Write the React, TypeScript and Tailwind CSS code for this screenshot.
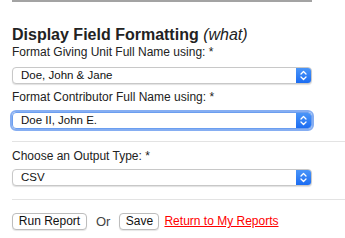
import React from "react";

/* Report builder: display formatting section, mocked as static controls. */
function FakeSelect({ value, focused }: { value: string; focused?: boolean }) {
  return (
    <div
      className={
        "flex h-[17px] w-[300px] items-stretch rounded-[4px] border bg-white shadow-[0_1px_1px_rgba(0,0,0,0.12)] " +
        (focused
          ? "border-[#6b9ef0] outline outline-[2px] outline-[#86aef2]"
          : "border-[#c8c8c8]")
      }
    >
      <span className="flex-1 pl-[8px] text-[11.5px] leading-[15px] text-[#111]">{value}</span>
      <span className="flex w-[15px] items-center justify-center rounded-r-[3px] bg-gradient-to-b from-[#4a95f8] to-[#1b6cf2]">
        <svg width="7" height="11" viewBox="0 0 7 11" fill="none">
          <path d="M1 4 L3.5 1.5 L6 4" stroke="white" strokeWidth="1.3" strokeLinecap="round" strokeLinejoin="round" />
          <path d="M1 7 L3.5 9.5 L6 7" stroke="white" strokeWidth="1.3" strokeLinecap="round" strokeLinejoin="round" />
        </svg>
      </span>
    </div>
  );
}

export default function App() {
  return (
    <div className="h-[238px] w-[345px] overflow-hidden bg-white pl-3 font-['Liberation_Sans',Arial,sans-serif] text-[#222]">
      <div className="h-[2px] w-[300px] bg-[#a3a3a3]" />
      <h2 className="mt-[23px] text-[16px] font-bold leading-[20px]">
        Display Field Formatting <span className="font-normal italic">(what)</span>
      </h2>
      <div className="text-[12px] leading-[14px]">Format Giving Unit Full Name using: *</div>
      <div className="mt-[8px]">
        <FakeSelect value="Doe, John & Jane" />
      </div>
      <div className="mt-[6px] text-[12px] leading-[14px]">Format Contributor Full Name using: *</div>
      <div className="mt-[8px]">
        <FakeSelect value="Doe II, John E." focused />
      </div>
      <div className="mt-[12px] h-px bg-[#e3e3e3]" />
      <div className="mt-[7px] text-[12px] leading-[14px]">Choose an Output Type: *</div>
      <div className="mt-[6px]">
        <FakeSelect value="CSV" />
      </div>
      <div className="mt-[13px] h-px bg-[#e3e3e3]" />
      <div className="mt-[13px] flex items-center">
        <button className="h-[17px] w-[75px] rounded-[4px] border border-[#bdbdbd] bg-white text-[12px] leading-[15px] text-[#111] shadow-[0_1px_1px_rgba(0,0,0,0.1)]">
          Run Report
        </button>
        <span className="ml-[9px] text-[13px] leading-[15px] text-[#444]">Or</span>
        <button className="ml-[9px] h-[17px] w-[40px] rounded-[4px] border border-[#bdbdbd] bg-white text-[12px] leading-[15px] text-[#111] shadow-[0_1px_1px_rgba(0,0,0,0.1)]">
          Save
        </button>
        <a href="#" className="ml-[5px] text-[12px] leading-[15px] text-[#ff0000] underline">
          Return to My Reports
        </a>
      </div>
    </div>
  );
}
